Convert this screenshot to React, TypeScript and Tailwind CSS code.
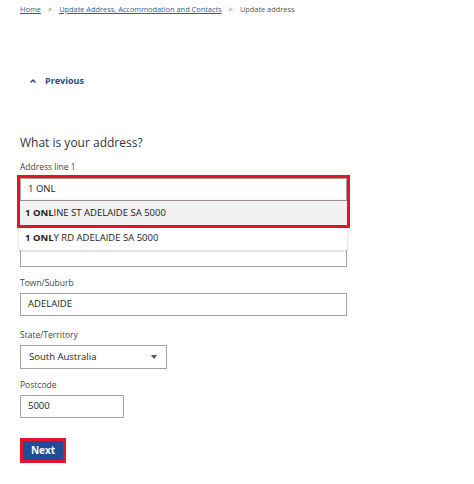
import { ChevronUp } from 'lucide-react'

const font = { fontFamily: '"Open Sans", "Liberation Sans", sans-serif' }

function Field({ label, value, width, mt }: { label: string; value: string; width: string; mt: string }) {
    return (
        <div className={mt}>
            <div className="text-[8.5px] leading-[12px] text-[#444]">{label}</div>
            <div className={`mt-[4px] h-[23px] ${width} border border-[#a3a3a3] bg-white px-[7px] flex items-center text-[9.5px] text-[#222]`}>
                {value}
            </div>
        </div>
    )
}

export default function App() {
    return (
        <div className="w-[474px] h-[484px] bg-white pl-[20px] pt-[3px]" style={font}>
            {/* Breadcrumb */}
            <div className="flex items-center text-[7.4px] leading-[12px] text-[#555]">
                <a className="text-[#2f5ea6] underline">Home</a>
                <span className="mx-[7px] text-[#777]">&gt;</span>
                <a className="text-[#2f5ea6] underline">Update Address, Accommodation and Contacts</a>
                <span className="mx-[7px] text-[#777]">&gt;</span>
                <span>Update address</span>
            </div>

            {/* Previous */}
            <div className="mt-[59px] flex items-center h-[14px] text-[9px] font-bold text-[#1f4b8a]">
                <ChevronUp className="w-[8px] h-[8px] ml-[9px]" strokeWidth={4.5} />
                <span className="ml-[8px]">Previous</span>
            </div>

            {/* Heading */}
            <h1 className="mt-[47px] text-[12px] leading-[16px] text-[#333]">What is your address?</h1>

            {/* Address line 1 */}
            <div className="mt-[10px] text-[8.5px] leading-[12px] text-[#444]">Address line 1</div>
            <div className="relative mt-[5px] w-[327px]">
                <div className="h-[23px] border border-[#a3a3a3] bg-white px-[7px] flex items-center text-[9.5px] text-[#222]">
                    1 ONL
                </div>
                {/* suggestions */}
                <div className="absolute left-[-1px] top-[22px] w-[328px] bg-white shadow-[0_1px_3px_rgba(0,0,0,0.2)] z-10 text-[9.5px] text-[#222]">
                    <div className="h-[25px] flex items-center px-[6px] bg-[#f1f1f1] border-t border-[#9c8a90]">
                        <span>
                            <b>1 ONL</b>INE ST ADELAIDE SA 5000
                        </span>
                    </div>
                    <div className="h-[25px] flex items-center px-[6px] border-t border-[#e4e4e4]">
                        <span>
                            <b>1 ONL</b>Y RD ADELAIDE SA 5000
                        </span>
                    </div>
                </div>
                {/* highlight */}
                <div className="absolute left-[-3px] top-[-3px] w-[333px] h-[53px] border-[3px] border-[#e3142c] z-20 pointer-events-none" />
            </div>

            {/* Address line 2 input, mostly covered by the list */}
            <div className="mt-[43px] h-[23px] w-[327px] border border-[#a3a3a3] bg-white" />

            <Field label="Town/Suburb" value="ADELAIDE" width="w-[327px]" mt="mt-[10px]" />

            {/* State */}
            <div className="mt-[13px]">
                <div className="text-[8.5px] leading-[12px] text-[#444]">State/Territory</div>
                <div className="mt-[4px] h-[24px] w-[147px] border border-[#a3a3a3] bg-white pl-[8px] pr-[9px] flex items-center justify-between text-[9.5px] text-[#222]">
                    <span>South Australia</span>
                    <span className="w-0 h-0 border-l-[3.5px] border-r-[3.5px] border-t-[4px] border-l-transparent border-r-transparent border-t-[#555]" />
                </div>
            </div>

            <Field label="Postcode" value="5000" width="w-[104px]" mt="mt-[10px]" />

            {/* Next */}
            <div className="mt-[20px] inline-block border-[3px] border-[#e3142c]">
                <button className="h-[19px] w-[40px] bg-[#1f4d96] text-white text-[10px] font-bold flex items-center justify-center">
                    Next
                </button>
            </div>
        </div>
    )
}
